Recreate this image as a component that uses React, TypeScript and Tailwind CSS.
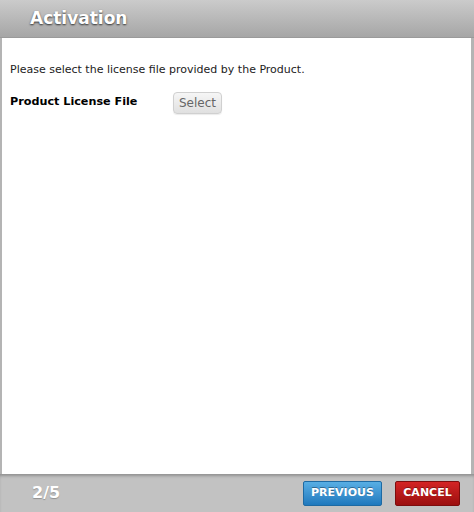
export default function App() {
  return (
    <div
      className="flex h-[512px] w-[474px] flex-col bg-[#b4b4b4]"
      style={{ fontFamily: '"DejaVu Sans", Verdana, sans-serif' }}
    >
      {/* Header */}
      <div className="flex h-[38px] shrink-0 items-center border-b border-[#9a9a9a] bg-gradient-to-b from-[#cbcbcb] to-[#a6a6a6] pl-[30px]">
        <h1 className="text-[17px] font-bold text-white [text-shadow:0_1px_2px_rgba(0,0,0,0.75)]">
          Activation
        </h1>
      </div>

      {/* Body */}
      <div className="ml-[2px] mr-[3px] flex-1 bg-white px-[8px] pt-[24px] text-[11px] text-[#222]">
        <p>Please select the license file provided by the Product.</p>
        <div className="mt-[13px] flex items-center">
          <span className="w-[163px] text-[11.2px] font-bold text-black">Product License File</span>
          <button className="h-[22px] w-[49px] rounded-[4px] border border-[#d0d0d0] bg-gradient-to-b from-[#f6f6f6] to-[#e0e0e0] text-[12px] text-[#666] shadow-[0_1px_1px_rgba(0,0,0,0.08)]">
            Select
          </button>
        </div>
      </div>

      {/* Footer */}
      <div className="flex h-[38px] shrink-0 items-center bg-[#c2c2c2] pl-[32px] pr-[14px] shadow-[inset_0_3px_3px_-1px_rgba(0,0,0,0.25)]">
        <span className="text-[16px] font-bold text-white [text-shadow:0_1px_1px_rgba(0,0,0,0.25)]">2/5</span>
        <div className="ml-auto flex gap-[13px]">
          <button className="h-[25px] w-[79px] rounded-[2px] border border-[#1e6aa3] bg-gradient-to-b from-[#58aee4] to-[#1f79bd] text-[11px] font-bold text-white [text-shadow:0_-1px_0_rgba(0,0,0,0.35)]">
            PREVIOUS
          </button>
          <button className="h-[25px] w-[65px] rounded-[2px] border border-[#7d0d0d] bg-gradient-to-b from-[#d42424] to-[#9c0f0f] text-[11px] font-bold text-white [text-shadow:0_-1px_0_rgba(0,0,0,0.35)]">
            CANCEL
          </button>
        </div>
      </div>
    </div>
  );
}
